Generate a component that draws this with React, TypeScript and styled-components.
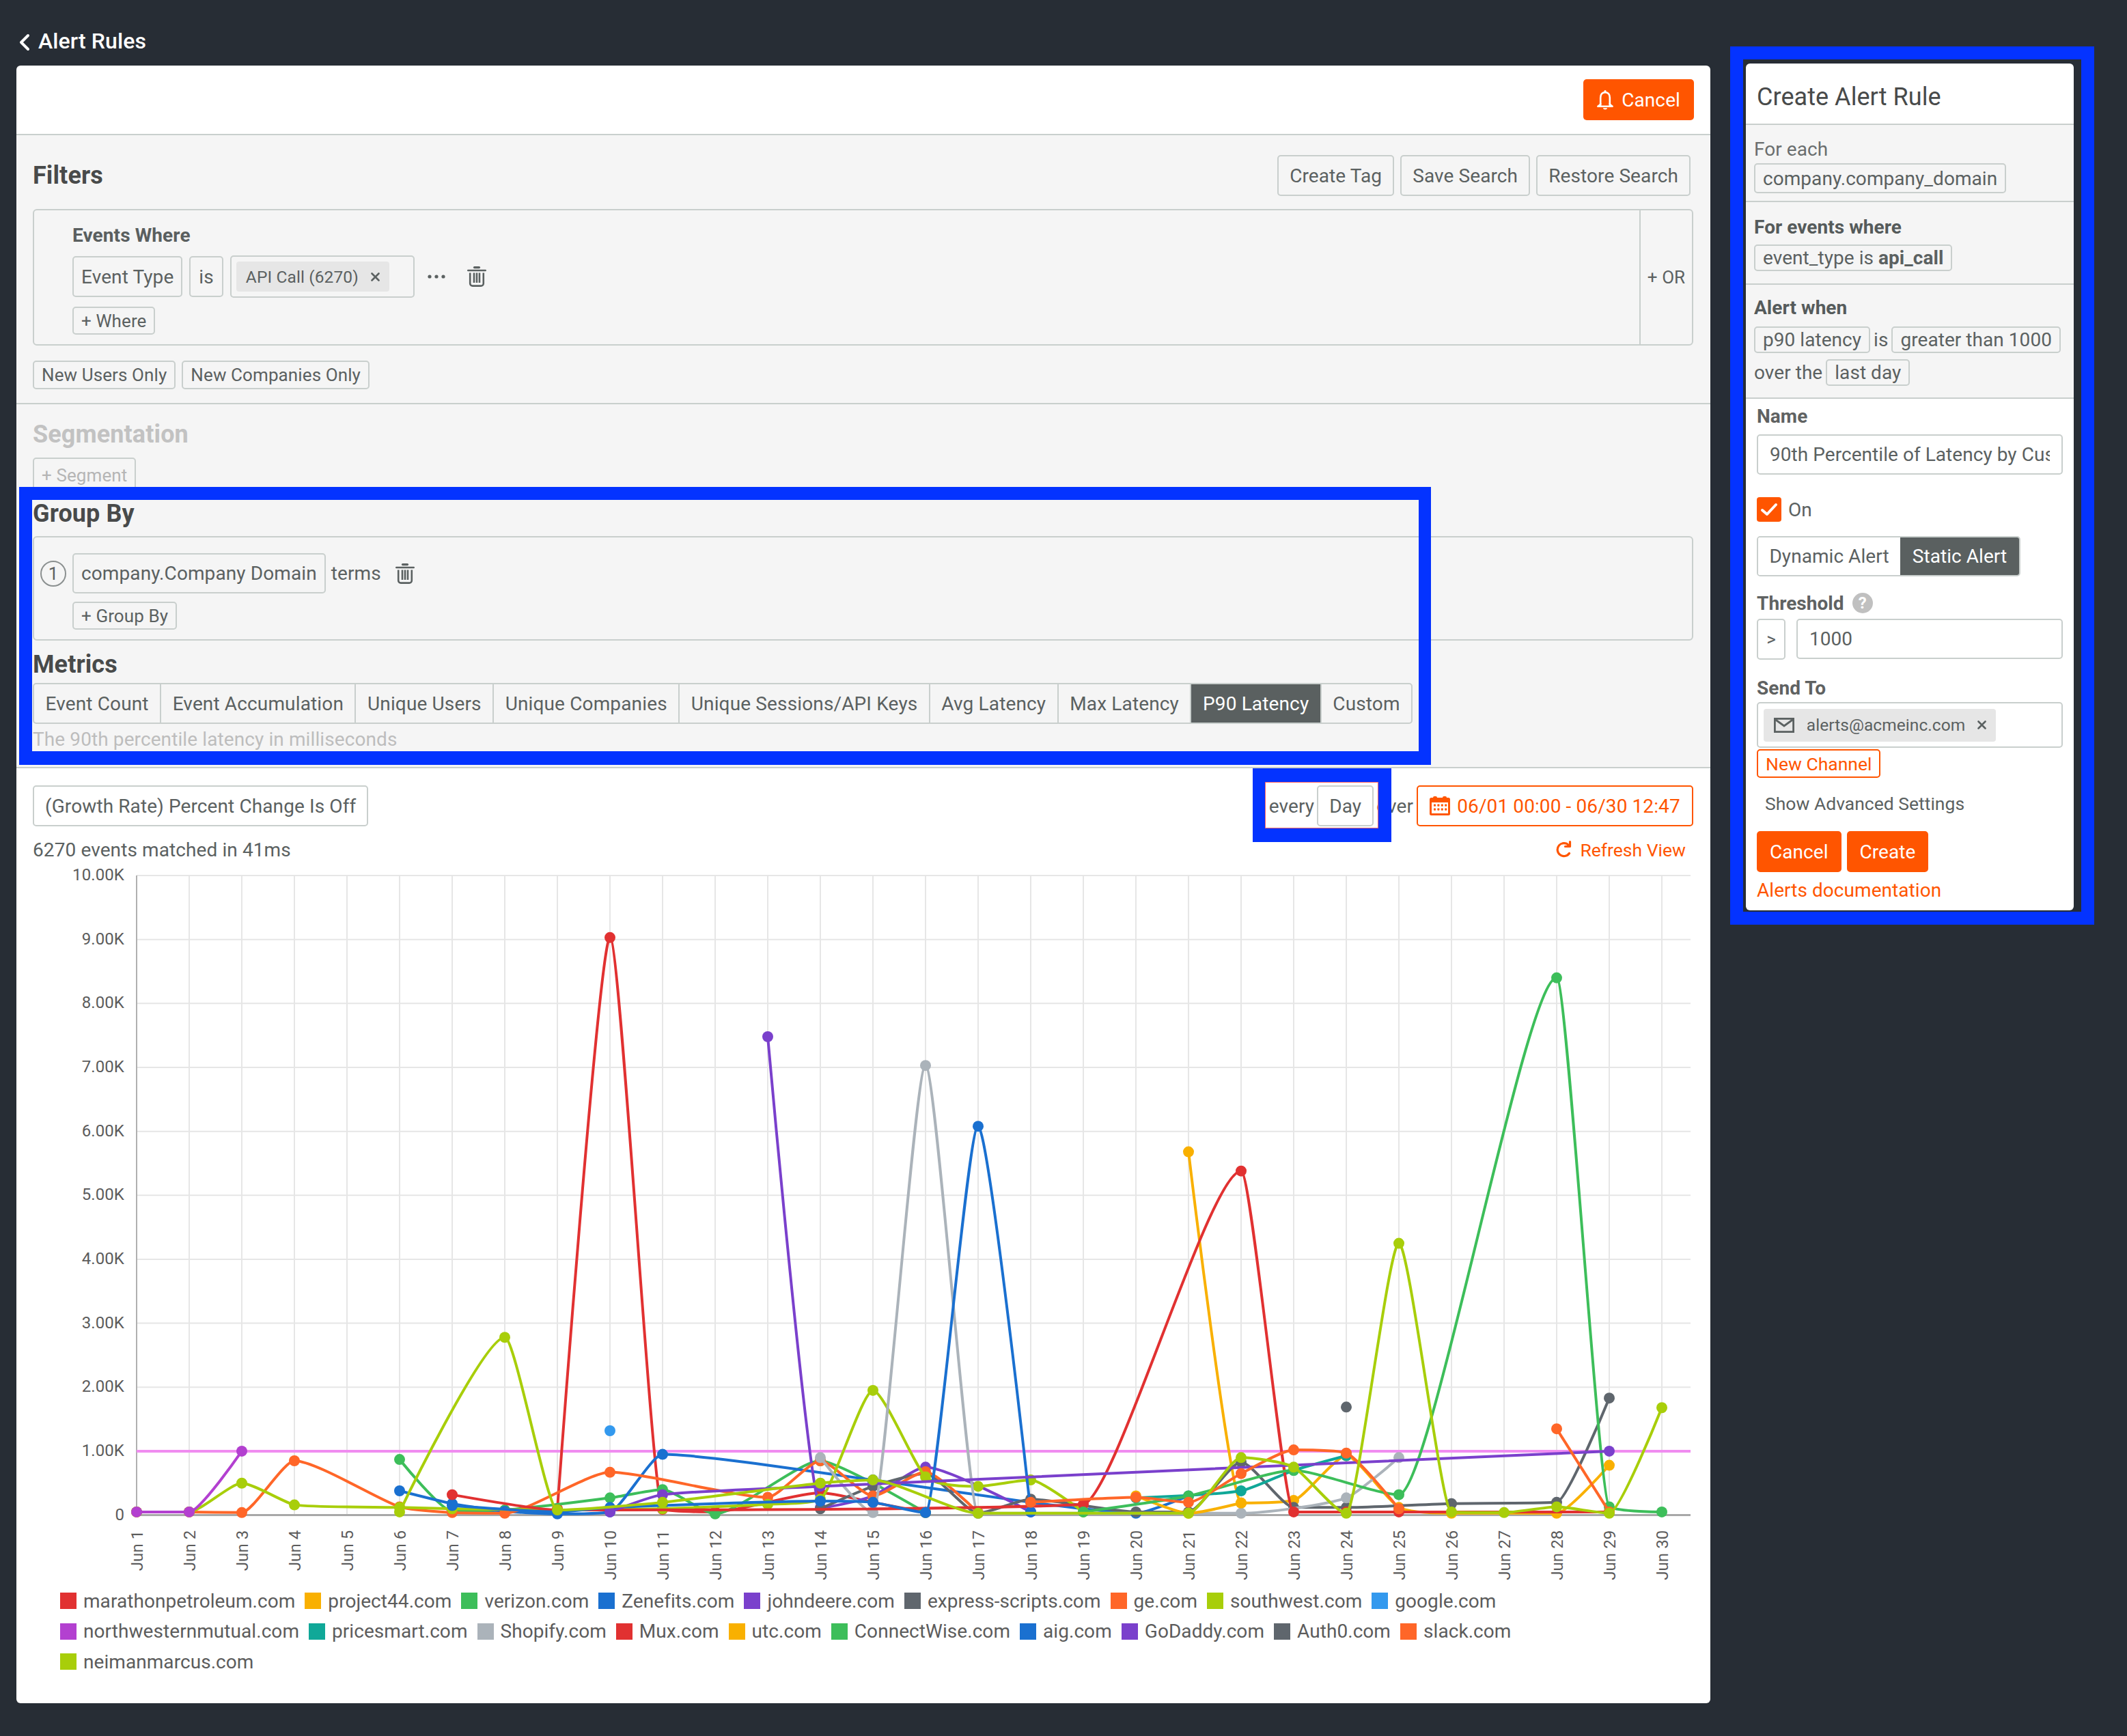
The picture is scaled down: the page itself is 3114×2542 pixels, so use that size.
import React from 'react';
import styled, { createGlobalStyle } from 'styled-components';

const ORANGE = '#ff5500';
const TEXT = '#5b6161';
const LINE = '#c9cfcd';

const COLORS = {
  red: '#e13131',
  amber: '#f9b000',
  green: '#3dbe5a',
  blue: '#1a70d0',
  purple: '#7a40cc',
  slate: '#5f666d',
  orange: '#ff6628',
  lime: '#a8ce0a',
  sky: '#3399ee',
  magenta: '#b340d0',
  teal: '#10a898',
  silver: '#abb3ba',
};

type Point = [number, number];
type Series = { name: string; color: string; points: Point[]; also?: Point[] };

const SERIES: Series[] = [
  { name: 'marathonpetroleum.com', color: COLORS.red, points: [[9, 0.1], [10, 9.03], [11, 0.09], [12, 0.05], [14, 0.35], [15, 0.2], [16, 0.04]] },
  { name: 'project44.com', color: COLORS.amber, points: [[21, 5.68], [22, 0.19], [23, 0.23], [24, 0.93], [25, 0.12], [26, 0.03], [28, 0.03], [29, 0.78]] },
  { name: 'verizon.com', color: COLORS.green, points: [[6, 0.87], [7, 0.06], [8, 0.08], [10, 0.27], [11, 0.4], [12, 0.02], [14, 0.85], [15, 0.5], [16, 0.04]] },
  { name: 'Zenefits.com', color: COLORS.blue, points: [[6, 0.38], [7, 0.18], [8, 0.06], [9, 0.02], [10, 0.05], [11, 0.95], [15, 0.55], [18, 0.2], [20, 0.03], [21, 0.3]] },
  { name: 'johndeere.com', color: COLORS.purple, points: [[13, 7.48], [14, 0.12], [15, 0.3], [16, 0.75], [18, 0.05]] },
  { name: 'express-scripts.com', color: COLORS.slate, points: [[14, 0.1], [15, 0.45], [16, 0.65], [17, 0.03], [18, 0.25], [20, 0.05], [21, 0.05], [22, 0.83], [23, 0.12], [24, 0.12], [26, 0.18], [28, 0.2], [29, 1.83]] },
  { name: 'ge.com', color: COLORS.orange, points: [[1, 0.05], [2, 0.05], [3, 0.04], [4, 0.85], [6, 0.13], [7, 0.04], [8, 0.03], [10, 0.67], [13, 0.28], [14, 0.85], [15, 0.3], [16, 0.68], [17, 0.04]] },
  { name: 'southwest.com', color: COLORS.lime, points: [[1, 0.05], [2, 0.05], [3, 0.5], [4, 0.16], [6, 0.12], [7, 0.1], [9, 0.08], [11, 0.1], [13, 0.17], [14, 0.25], [15, 1.95], [16, 0.6], [17, 0.45], [18, 0.55], [19, 0.05]] },
  { name: 'google.com', color: COLORS.sky, points: [[10, 1.32]] },
  { name: 'northwesternmutual.com', color: COLORS.magenta, points: [[1, 0.05], [2, 0.05], [3, 1.0]] },
  { name: 'pricesmart.com', color: COLORS.teal, points: [[20, 0.27], [22, 0.38], [23, 0.7], [24, 0.93]] },
  { name: 'Shopify.com', color: COLORS.silver, points: [[14, 0.9], [15, 0.04], [16, 7.03], [17, 0.03], [22, 0.03], [24, 0.27], [25, 0.9]] },
  { name: 'Mux.com', color: COLORS.red, points: [[7, 0.32], [9, 0.08], [19, 0.17], [22, 5.38], [23, 0.05], [24, 0.05], [25, 0.05], [29, 0.05]] },
  { name: 'utc.com', color: COLORS.amber, points: [[20, 0.3], [21, 0.03], [22, 0.19]] },
  { name: 'ConnectWise.com', color: COLORS.green, points: [[19, 0.05], [21, 0.3], [23, 0.7], [25, 0.32], [28, 8.4], [29, 0.13], [30, 0.05]] },
  { name: 'aig.com', color: COLORS.blue, points: [[7, 0.15], [9, 0.05], [10, 0.12], [14, 0.22], [15, 0.2], [16, 0.04], [17, 6.08], [18, 0.05]] },
  { name: 'GoDaddy.com', color: COLORS.purple, points: [[10, 0.05], [11, 0.32], [14, 0.45], [29, 1.0]] },
  { name: 'Auth0.com', color: COLORS.slate, points: [[24, 1.69]] },
  { name: 'slack.com', color: COLORS.orange, points: [[18, 0.2], [20, 0.28], [21, 0.2], [22, 0.65], [23, 1.02], [24, 0.97], [25, 0.1]], also: [[28, 1.35], [29, 0.05]] },
  { name: 'neimanmarcus.com', color: COLORS.lime, points: [[6, 0.05], [8, 2.78], [9, 0.08], [11, 0.2], [14, 0.5], [15, 0.55], [17, 0.03], [21, 0.03], [22, 0.9], [23, 0.75], [24, 0.03], [25, 4.25], [26, 0.05], [27, 0.04], [28, 0.13], [29, 0.03], [30, 1.68]] },
];

// chart geometry, in svg units (the svg starts at the card's left edge)
const PLOT_LEFT = 176;
const PLOT_RIGHT = 2451;
const PLOT_TOP = 20;
const PLOT_ZERO = 956.6;
const DAY_STEP = 77;
const K_STEP = (PLOT_ZERO - PLOT_TOP) / 10;

const dayX = (day: number) => PLOT_LEFT + (day - 1) * DAY_STEP;
const valueY = (value: number) => PLOT_ZERO - value * K_STEP;

// spline with control points kept close to the data points
const splinePath = (points: Point[]) => {
  const pts = points.map(([d, v]) => ({ x: dayX(d), y: valueY(v) }));
  const smoothing = 4;
  const denom = smoothing + 1;
  const conts = pts.map((p, i) => {
    const last = pts[i - 1];
    const next = pts[i + 1];
    if (!last || !next) return { lx: p.x, ly: p.y, rx: p.x, ry: p.y };
    const lx = (smoothing * p.x + last.x) / denom;
    let ly = (smoothing * p.y + last.y) / denom;
    const rx = (smoothing * p.x + next.x) / denom;
    let ry = (smoothing * p.y + next.y) / denom;
    const correction = ((ry - ly) * (rx - p.x)) / (rx - lx) + p.y - ry;
    ly += correction;
    ry += correction;
    if (ly > last.y && ly > p.y) {
      ly = Math.max(last.y, p.y);
      ry = 2 * p.y - ly;
    } else if (ly < last.y && ly < p.y) {
      ly = Math.min(last.y, p.y);
      ry = 2 * p.y - ly;
    }
    if (ry > next.y && ry > p.y) {
      ry = Math.max(next.y, p.y);
      ly = 2 * p.y - ry;
    } else if (ry < next.y && ry < p.y) {
      ry = Math.min(next.y, p.y);
      ly = 2 * p.y - ry;
    }
    return { lx, ly, rx, ry };
  });
  return pts
    .map((p, i) => {
      if (i === 0) return `M ${p.x} ${p.y}`;
      const a = conts[i - 1];
      const b = conts[i];
      return `C ${a.rx} ${a.ry} ${b.lx} ${b.ly} ${p.x} ${p.y}`;
    })
    .join(' ');
};

const GlobalStyle = createGlobalStyle`
  html, body {
    margin: 0;
    padding: 0;
    background: #272d35;
    font-family: Roboto, "Liberation Sans", sans-serif;
  }
  * { box-sizing: border-box; }
  button { letter-spacing: inherit; }
`;

const Page = styled.div`
  position: relative;
  width: 3114px;
  height: 2542px;
  overflow: hidden;
  display: flex;
  align-items: flex-start;
  padding-left: 24px;
  color: ${TEXT};
  font-size: 28px;
  letter-spacing: 0.1px;
`;

const MainColumn = styled.div`
  width: 2480px;
  flex-shrink: 0;
`;

const BackLink = styled.div`
  height: 96px;
  padding: 24px 0 0 4px;
  display: flex;
  align-items: center;
  gap: 12px;
  color: #fff;
  font-size: 32px;
  font-weight: 500;
  svg { margin-top: 4px; }
`;

const Card = styled.div`
  height: 2398px;
  background: #fff;
  border-radius: 6px;
  overflow: hidden;
`;

const CardHeader = styled.div`
  height: 102px;
  padding: 20px 24px 0 0;
  display: flex;
  justify-content: flex-end;
  align-items: flex-start;
  border-bottom: 2px solid ${LINE};
`;

const SolidButton = styled.button`
  height: 60px;
  padding: 0 19px;
  display: inline-flex;
  align-items: center;
  gap: 10px;
  background: ${ORANGE};
  color: #fff;
  border: 0;
  border-radius: 5px;
  font: 400 28px Roboto, sans-serif;
`;

const HeaderCancel = styled(SolidButton)`
  padding: 0 20px;
  gap: 12px;
`;

const GreySection = styled.div`
  background: #f5f5f5;
  padding: 0 25px 0 24px;
  border-bottom: 2px solid ${LINE};
`;

const FiltersSection = styled(GreySection)`
  padding-top: 29px;
  padding-bottom: 20px;
`;

const BuilderSection = styled(GreySection)`
  padding-top: 24px;
  padding-bottom: 23px;
`;

const FiltersHead = styled.div`
  height: 60px;
  display: flex;
  align-items: center;
  justify-content: space-between;
  padding-right: 4px;
`;

const Heading = styled.h2<{ $muted?: boolean; $top?: number }>`
  margin: ${(p) => p.$top ?? 0}px 0 0;
  font-size: 36px;
  line-height: 40px;
  font-weight: 700;
  color: ${(p) => (p.$muted ? '#c2c2c2' : '#484a4a')};
`;

const ButtonRow = styled.div`
  display: flex;
  gap: 9px;
`;

const Outline = styled.button<{ $h?: number; $muted?: boolean; $size?: number; $pad?: number }>`
  height: ${(p) => p.$h ?? 60}px;
  padding: 0 ${(p) => p.$pad ?? (p.$h && p.$h < 50 ? 11 : 16)}px;
  background: transparent;
  border: 2px solid ${LINE};
  border-radius: 5px;
  color: ${(p) => (p.$muted ? '#b5b5b5' : TEXT)};
  font: 400 ${(p) => p.$size ?? 28}px Roboto, sans-serif;
  white-space: nowrap;
  display: inline-flex;
  align-items: center;
`;

const QueryBox = styled.div`
  margin-top: 19px;
  height: 200px;
  display: flex;
  border: 2px solid ${LINE};
  border-radius: 6px;
`;

const QueryBody = styled.div`
  flex: 1;
  padding: 20px 0 0 56px;
`;

const SubHeading = styled.div`
  line-height: 34px;
  font-weight: 700;
  color: #5a5f5f;
`;

const ClauseRow = styled.div`
  margin-top: 12px;
  height: 62px;
  display: flex;
  align-items: center;
  gap: 10px;
`;

const AddWhere = styled.div`
  margin-top: 13px;
`;

const OrCell = styled.div`
  width: 77px;
  border-left: 2px solid ${LINE};
  display: flex;
  align-items: center;
  justify-content: center;
  font-size: 26px;
`;

const ValueSelect = styled.div`
  width: 270px;
  height: 62px;
  padding: 0 7px;
  border: 2px solid ${LINE};
  border-radius: 5px;
  display: flex;
  align-items: center;
`;

const Tag = styled.span`
  width: 224px;
  height: 44px;
  padding-left: 14px;
  display: flex;
  align-items: center;
  justify-content: space-between;
  padding-right: 14px;
  background: #e6e6e6;
  border-radius: 4px;
  font-size: 24.5px;
`;

const IconSlot = styled.span<{ $left?: number }>`
  display: inline-flex;
  margin-left: ${(p) => p.$left ?? 0}px;
`;

const QuickFilters = styled(ButtonRow)`
  margin-top: 22px;
`;

const SegmentButton = styled.div`
  margin-top: 14px;
`;

const GroupBox = styled.div`
  margin-top: 13px;
  height: 153px;
  padding: 23px 0 0 9px;
  border: 2px solid ${LINE};
  border-radius: 6px;
`;

const GroupRow = styled.div`
  height: 59px;
  display: flex;
  align-items: center;
`;

const IndexCircle = styled.span`
  width: 38px;
  height: 38px;
  margin-right: 9px;
  border: 2px solid #8b9090;
  border-radius: 50%;
  display: flex;
  align-items: center;
  justify-content: center;
  font-size: 26px;
`;

const AddGroup = styled.div`
  margin: 12px 0 0 47px;
`;

const MetricTabs = styled.div`
  margin-top: 7px;
  height: 60px;
  width: fit-content;
  display: flex;
  border: 2px solid ${LINE};
  border-radius: 5px;
  overflow: hidden;
  letter-spacing: 0.14px;
`;

const MetricTab = styled.div<{ $active?: boolean }>`
  padding: 0 16.5px;
  display: flex;
  align-items: center;
  white-space: nowrap;
  background: ${(p) => (p.$active ? '#5a6060' : 'transparent')};
  color: ${(p) => (p.$active ? '#fff' : TEXT)};
  & + & { border-left: 2px solid ${LINE}; }
`;

const Hint = styled.div`
  margin-top: 6px;
  line-height: 34px;
  color: #bdbdbd;
`;

const ChartSection = styled.div`
  padding: 25px 25px 0 24px;
`;

const ChartControls = styled.div`
  height: 60px;
  display: flex;
  justify-content: space-between;
`;

const Interval = styled.div`
  display: flex;
  align-items: center;
`;

const IntervalWord = styled.span<{ $left: number; $right: number }>`
  margin: 0 ${(p) => p.$right}px 0 ${(p) => p.$left}px;
`;

const DateButton = styled.button`
  width: 405px;
  height: 60px;
  display: flex;
  align-items: center;
  justify-content: center;
  gap: 10px;
  background: #fff;
  border: 2px solid ${ORANGE};
  border-radius: 5px;
  color: ${ORANGE};
  font: 400 28px Roboto, sans-serif;
  white-space: nowrap;
`;

const StatsRow = styled.div`
  margin-top: 17px;
  height: 34px;
  display: flex;
  align-items: center;
  justify-content: space-between;
  padding-right: 11px;
`;

const RefreshLink = styled.span`
  display: flex;
  align-items: center;
  gap: 11px;
  color: ${ORANGE};
  font-size: 26.5px;
  letter-spacing: 0;
`;

const ChartSvg = styled.svg`
  display: block;
  width: 2480px;
  height: 1060px;
  margin: 1px 0 0 -24px;
`;

const AxisText = styled.text`
  font: 400 24px Roboto, sans-serif;
  fill: #5c5c5c;
`;

const Legend = styled.div`
  margin-left: 40px;
  display: flex;
  flex-wrap: wrap;
  column-gap: 14px;
  letter-spacing: 0.06px;
`;

const LegendItem = styled.div`
  height: 44.5px;
  display: flex;
  align-items: center;
  gap: 10px;
  color: #5c5c5c;
`;

const Swatch = styled.i<{ $color: string }>`
  width: 24px;
  height: 24px;
  background: ${(p) => p.$color};
`;

const SidePanel = styled.aside`
  margin: 93px 0 0 52px;
  width: 480px;
  height: 1240px;
  flex-shrink: 0;
  background: #fff;
  border-radius: 6px;
  overflow: hidden;
  letter-spacing: 0.05px;
`;

const PanelTitle = styled.div`
  height: 90px;
  padding: 9px 0 0 16px;
  display: flex;
  align-items: center;
  font-size: 36px;
  color: #484a4a;
  border-bottom: 2px solid ${LINE};
`;

const SummaryBlock = styled.div<{ $top: number; $bottom: number }>`
  padding: ${(p) => p.$top}px 12px ${(p) => p.$bottom}px;
  background: #f5f5f5;
  border-bottom: 2px solid ${LINE};
`;

const SummaryLabel = styled.div<{ $bold?: boolean }>`
  line-height: 32px;
  font-weight: ${(p) => (p.$bold ? 700 : 400)};
  color: ${(p) => (p.$bold ? '#555b5b' : '#6a6e6e')};
`;

const SummaryLine = styled.div<{ $top: number }>`
  margin-top: ${(p) => p.$top}px;
  display: flex;
  align-items: center;
  gap: 5px;
`;

const Chip = styled.span<{ $tall?: boolean }>`
  height: ${(p) => (p.$tall ? 44 : 39)}px;
  padding: 0 11px;
  display: inline-flex;
  align-items: center;
  white-space: pre;
  border: 2px solid ${LINE};
  border-radius: 5px;
`;

const PanelForm = styled.div`
  padding: 9px 16px 0;
`;

const FieldLabel = styled.div<{ $top?: number }>`
  margin-top: ${(p) => p.$top ?? 0}px;
  height: 32px;
  display: flex;
  align-items: center;
  gap: 12px;
  font-weight: 700;
  color: #5f6262;
`;

const TextBox = styled.div<{ $top?: number }>`
  margin-top: ${(p) => p.$top ?? 0}px;
  flex: 1;
  height: 59px;
  padding: 0 17px;
  display: flex;
  align-items: center;
  border: 2px solid ${LINE};
  border-radius: 5px;
  background: #fff;
`;

const ClippedValue = styled.span`
  display: block;
  width: 100%;
  overflow: hidden;
  white-space: nowrap;
`;

const CheckRow = styled.div`
  margin-top: 33px;
  height: 36px;
  display: flex;
  align-items: center;
  gap: 10px;
`;

const CheckBox = styled.span`
  width: 36px;
  height: 36px;
  display: flex;
  align-items: center;
  justify-content: center;
  background: ${ORANGE};
  border-radius: 4px;
`;

const AlertToggle = styled.div`
  margin-top: 21px;
  width: 386px;
  height: 59px;
  display: flex;
  border: 2px solid ${LINE};
  border-radius: 5px;
  overflow: hidden;
`;

const ToggleOption = styled.div<{ $active?: boolean }>`
  flex: ${(p) => (p.$active ? '0 0 174px' : '1')};
  display: flex;
  align-items: center;
  justify-content: center;
  background: ${(p) => (p.$active ? '#5a6060' : '#fff')};
  color: ${(p) => (p.$active ? '#fff' : TEXT)};
`;

const HelpDot = styled.span`
  width: 30px;
  height: 30px;
  border-radius: 50%;
  display: flex;
  align-items: center;
  justify-content: center;
  background: #c0c0c0;
  color: #fff;
  font-size: 24px;
  font-weight: 700;
`;

const ThresholdRow = styled.div`
  margin-top: 7px;
  display: flex;
  gap: 16px;
`;

const OperatorBox = styled.div`
  width: 42px;
  height: 60px;
  display: flex;
  align-items: center;
  justify-content: center;
  border: 2px solid ${LINE};
  border-radius: 5px;
  font-size: 26px;
`;

const ChannelBox = styled.div`
  margin-top: 5px;
  height: 67px;
  padding-left: 8px;
  display: flex;
  align-items: center;
  border: 2px solid ${LINE};
  border-radius: 5px;
`;

const ChannelTag = styled.div`
  width: 340px;
  height: 48px;
  padding: 0 14px;
  display: flex;
  align-items: center;
  justify-content: space-between;
  background: #e6e6e6;
  border-radius: 4px;
  font-size: 24.5px;
`;

const NewChannel = styled.button`
  margin-top: 2px;
  height: 42px;
  padding: 0 11px;
  background: #fff;
  border: 2px solid ${ORANGE};
  border-radius: 5px;
  color: ${ORANGE};
  font: 400 26.5px Roboto, sans-serif;
  letter-spacing: 0;
`;

const AdvancedLink = styled.div`
  margin: 22px 0 0 12px;
  line-height: 32px;
  font-size: 26.5px;
  letter-spacing: 0;
`;

const PanelActions = styled.div`
  margin-top: 24px;
  display: flex;
  gap: 8px;
`;

const DocsLink = styled.div`
  margin-top: 11px;
  line-height: 32px;
  color: ${ORANGE};
`;

const MarkupFrame = styled.div<{ $x: number; $y: number; $w: number; $h: number }>`
  position: absolute;
  left: ${(p) => p.$x}px;
  top: ${(p) => p.$y}px;
  width: ${(p) => p.$w}px;
  height: ${(p) => p.$h}px;
  border: 19px solid #0433ff;
  pointer-events: none;
`;

const GroupFrame = styled(MarkupFrame)`
  border-width: 19px 18px 20px 19px;
  box-shadow: 19px 2px 0 -19px #f55;
`;

const IntervalFrame = styled(MarkupFrame)`
  border-width: 20px 19px 20px 18px;
  &::after {
    content: '';
    position: absolute;
    inset: 0;
    border: 1px solid #f66;
  }
`;

const ChevronIcon = () => (
  <svg width="16" height="26" viewBox="0 0 16 26" fill="none" stroke="#fff" strokeWidth="4" strokeLinecap="round" strokeLinejoin="round">
    <path d="M13 3 L3 13 L13 23" />
  </svg>
);

const BellIcon = () => (
  <svg width="24" height="30" viewBox="0 0 24 30" fill="none" stroke="#fff" strokeWidth="2.6" strokeLinejoin="round" strokeLinecap="round">
    <circle cx="12" cy="2.6" r="1.6" fill="#fff" stroke="none" />
    <path d="M5.2 23.5 V12 C5.2 7 8 4.2 12 4.2 C16 4.2 18.8 7 18.8 12 V23.5" />
    <path d="M5.2 21 C5 22.6 3.4 23.4 1.4 24.8 H22.6 C20.6 23.4 19 22.6 18.8 21" />
    <path d="M9.5 28 C10.5 29.4 13.5 29.4 14.5 28 Z" fill="#fff" strokeWidth="1" />
  </svg>
);

const TrashIcon = () => (
  <svg width="28" height="30" viewBox="0 0 28 30" fill="none" stroke="#5b6161" strokeLinecap="round">
    <path d="M10.5 1.6 H17.5" strokeWidth="3.2" />
    <path d="M1.2 6 H26.8" strokeWidth="2.4" />
    <path d="M4.2 9.5 V25 A3.6 3.6 0 0 0 7.8 28.6 H20.2 A3.6 3.6 0 0 0 23.8 25 V9.5" strokeWidth="2.6" strokeLinecap="butt" />
    <path d="M10 9.5 V24 M14 9.5 V24 M18 9.5 V24" strokeWidth="2.6" strokeLinecap="butt" />
  </svg>
);

const DotsIcon = () => (
  <svg width="26" height="6" viewBox="0 0 26 6" fill="#5b6161">
    <circle cx="3" cy="3" r="2.6" />
    <circle cx="13" cy="3" r="2.6" />
    <circle cx="23" cy="3" r="2.6" />
  </svg>
);

const CloseIcon = ({ size = 13 }: { size?: number }) => (
  <svg width={size} height={size} viewBox="0 0 13 13" stroke="#5b6161" strokeWidth="2.6" strokeLinecap="round">
    <path d="M1.5 1.5 L11.5 11.5 M11.5 1.5 L1.5 11.5" />
  </svg>
);

const CalendarIcon = () => (
  <svg width="30" height="28" viewBox="0 0 30 28" fill={ORANGE}>
    <rect x="5" y="0" width="6" height="6" rx="2" />
    <rect x="19" y="0" width="6" height="6" rx="2" />
    <rect x="0" y="2" width="30" height="26" rx="2.5" />
    <rect x="3" y="9" width="24" height="16" fill="#fff" />
    {[0, 1].map((row) =>
      [0, 1, 2, 3].map((col) => <rect key={`${row}-${col}`} x={6 + col * 5.4} y={11.5 + row * 6} width="3" height="3.2" rx="0.8" />),
    )}
  </svg>
);

const RefreshIcon = () => (
  <svg width="24" height="28" viewBox="0 0 24 28" fill="none" stroke={ORANGE} strokeWidth="3.2" strokeLinecap="round" strokeLinejoin="round">
    <path d="M19.5 19.5 A9.5 9.5 0 1 1 18.5 7.5" />
    <path d="M20.5 2.5 V9.5 H13.5" />
  </svg>
);

const CheckIcon = () => (
  <svg width="26" height="22" viewBox="0 0 26 22" fill="none" stroke="#fff" strokeWidth="4" strokeLinecap="round" strokeLinejoin="round">
    <path d="M3 12 L10 18 L23 4" />
  </svg>
);

const MailIcon = () => (
  <svg width="30" height="22" viewBox="0 0 30 22" fill="none" stroke="#5b6161" strokeWidth="2.8">
    <rect x="1.4" y="1.4" width="27.2" height="19.2" />
    <path d="M2 2.5 L15 12 L28 2.5" />
  </svg>
);

const SeriesLine = ({ points, color }: { points: Point[]; color: string }) => (
  <g>
    <path d={splinePath(points)} fill="none" stroke={color} strokeWidth="4" strokeLinejoin="round" />
    {points.map(([d, v]) => (
      <circle key={d} cx={dayX(d)} cy={valueY(v)} r="8" fill={color} />
    ))}
  </g>
);

const Chart = () => {
  const ks = Array.from({ length: 11 }, (_, i) => i);
  const days = Array.from({ length: 30 }, (_, i) => i + 1);
  return (
    <ChartSvg viewBox="0 0 2480 1060">
      {ks.map((k) => (
        <line key={k} x1={PLOT_LEFT} x2={PLOT_RIGHT} y1={valueY(k)} y2={valueY(k)} stroke="#e6e6e6" strokeWidth="2" />
      ))}
      {days.map((d) => (
        <line key={d} x1={dayX(d)} x2={dayX(d)} y1={PLOT_TOP} y2={PLOT_ZERO} stroke="#e6e6e6" strokeWidth="2" />
      ))}
      <line x1={PLOT_LEFT} x2={PLOT_LEFT} y1={PLOT_TOP} y2={PLOT_ZERO} stroke="#b0b0b0" strokeWidth="2" />
      <line x1={PLOT_LEFT} x2={PLOT_RIGHT} y1={PLOT_ZERO} y2={PLOT_ZERO} stroke="#a8a8a8" strokeWidth="3" />
      {ks.map((k) => (
        <AxisText key={k} x={PLOT_LEFT - 18} y={valueY(k) + 7} textAnchor="end">
          {k === 0 ? '0' : `${k}.00K`}
        </AxisText>
      ))}
      {days.map((d) => (
        <AxisText key={d} textAnchor="end" transform={`translate(${dayX(d) + 9} ${PLOT_ZERO + 22}) rotate(-90)`}>
          {`Jun ${d}`}
        </AxisText>
      ))}
      <line x1={PLOT_LEFT} x2={PLOT_RIGHT} y1={valueY(1)} y2={valueY(1)} stroke="#f08cf0" strokeWidth="4" />
      {SERIES.map((s) => (
        <g key={s.name}>
          <SeriesLine points={s.points} color={s.color} />
          {s.also && <SeriesLine points={s.also} color={s.color} />}
        </g>
      ))}
    </ChartSvg>
  );
};

const METRICS = ['Event Count', 'Event Accumulation', 'Unique Users', 'Unique Companies', 'Unique Sessions/API Keys', 'Avg Latency', 'Max Latency', 'P90 Latency', 'Custom'];

const App = () => (
  <Page>
    <GlobalStyle />
    <MainColumn>
      <BackLink>
        <ChevronIcon />
        Alert Rules
      </BackLink>
      <Card>
        <CardHeader>
          <HeaderCancel>
            <BellIcon />
            Cancel
          </HeaderCancel>
        </CardHeader>
        <FiltersSection>
          <FiltersHead>
            <Heading>Filters</Heading>
            <ButtonRow>
              <Outline>Create Tag</Outline>
              <Outline>Save Search</Outline>
              <Outline>Restore Search</Outline>
            </ButtonRow>
          </FiltersHead>
          <QueryBox>
            <QueryBody>
              <SubHeading>Events Where</SubHeading>
              <ClauseRow>
                <Outline $pad={11}>Event Type</Outline>
                <Outline $pad={12}>is</Outline>
                <ValueSelect>
                  <Tag>
                    API Call (6270)
                    <CloseIcon />
                  </Tag>
                </ValueSelect>
                <IconSlot $left={9}>
                  <DotsIcon />
                </IconSlot>
                <IconSlot $left={22}>
                  <TrashIcon />
                </IconSlot>
              </ClauseRow>
              <AddWhere>
                <Outline $h={41} $size={26}>+ Where</Outline>
              </AddWhere>
            </QueryBody>
            <OrCell>+ OR</OrCell>
          </QueryBox>
          <QuickFilters>
            <Outline $h={42} $size={26}>New Users Only</Outline>
            <Outline $h={42} $size={26}>New Companies Only</Outline>
          </QuickFilters>
        </FiltersSection>
        <BuilderSection>
          <Heading $muted>Segmentation</Heading>
          <SegmentButton>
            <Outline $h={52} $muted $size={26} $pad={11}>+ Segment</Outline>
          </SegmentButton>
          <Heading $top={10}>Group By</Heading>
          <GroupBox>
            <GroupRow>
              <IndexCircle>1</IndexCircle>
              <Outline $h={59} $pad={11}>company.Company Domain</Outline>
              <IconSlot $left={8}>terms</IconSlot>
              <IconSlot $left={21}>
                <TrashIcon />
              </IconSlot>
            </GroupRow>
            <AddGroup>
              <Outline $h={41} $size={26}>+ Group By</Outline>
            </AddGroup>
          </GroupBox>
          <Heading $top={15}>Metrics</Heading>
          <MetricTabs>
            {METRICS.map((m) => (
              <MetricTab key={m} $active={m === 'P90 Latency'}>
                {m}
              </MetricTab>
            ))}
          </MetricTabs>
          <Hint>The 90th percentile latency in milliseconds</Hint>
        </BuilderSection>
        <ChartSection>
          <ChartControls>
            <Outline>(Growth Rate) Percent Change Is Off</Outline>
            <Interval>
              <IntervalWord $left={0} $right={4}>every</IntervalWord>
              <Outline>Day</Outline>
              <IntervalWord $left={4} $right={5}>over</IntervalWord>
              <DateButton>
                <CalendarIcon />
                06/01 00:00 - 06/30 12:47
              </DateButton>
            </Interval>
          </ChartControls>
          <StatsRow>
            <span>6270 events matched in 41ms</span>
            <RefreshLink>
              <RefreshIcon />
              Refresh View
            </RefreshLink>
          </StatsRow>
          <Chart />
          <Legend>
            {SERIES.map((s) => (
              <LegendItem key={s.name}>
                <Swatch $color={s.color} />
                {s.name}
              </LegendItem>
            ))}
          </Legend>
        </ChartSection>
      </Card>
    </MainColumn>
    <SidePanel>
      <PanelTitle>Create Alert Rule</PanelTitle>
      <SummaryBlock $top={20} $bottom={11}>
        <SummaryLabel>For each</SummaryLabel>
        <SummaryLine $top={4}>
          <Chip $tall>company.company_domain</Chip>
        </SummaryLine>
      </SummaryBlock>
      <SummaryBlock $top={21} $bottom={18}>
        <SummaryLabel $bold>For events where</SummaryLabel>
        <SummaryLine $top={9}>
          <Chip>
            event_type is <b>api_call</b>
          </Chip>
        </SummaryLine>
      </SummaryBlock>
      <SummaryBlock $top={18} $bottom={17}>
        <SummaryLabel $bold>Alert when</SummaryLabel>
        <SummaryLine $top={11}>
          <Chip>p90 latency</Chip>
          is
          <Chip>greater than 1000</Chip>
        </SummaryLine>
        <SummaryLine $top={9}>
          over the
          <Chip>last day</Chip>
        </SummaryLine>
      </SummaryBlock>
      <PanelForm>
        <FieldLabel>Name</FieldLabel>
        <TextBox $top={11}>
          <ClippedValue>90th Percentile of Latency by Customer</ClippedValue>
        </TextBox>
        <CheckRow>
          <CheckBox>
            <CheckIcon />
          </CheckBox>
          On
        </CheckRow>
        <AlertToggle>
          <ToggleOption>Dynamic Alert</ToggleOption>
          <ToggleOption $active>Static Alert</ToggleOption>
        </AlertToggle>
        <FieldLabel $top={23}>
          Threshold
          <HelpDot>?</HelpDot>
        </FieldLabel>
        <ThresholdRow>
          <OperatorBox>&gt;</OperatorBox>
          <TextBox>1000</TextBox>
        </ThresholdRow>
        <FieldLabel $top={25}>Send To</FieldLabel>
        <ChannelBox>
          <ChannelTag>
            <IconSlot $left={1}>
              <MailIcon />
            </IconSlot>
            alerts@acmeinc.com
            <CloseIcon />
          </ChannelTag>
        </ChannelBox>
        <NewChannel>New Channel</NewChannel>
        <AdvancedLink>Show Advanced Settings</AdvancedLink>
        <PanelActions>
          <SolidButton>Cancel</SolidButton>
          <SolidButton>Create</SolidButton>
        </PanelActions>
        <DocsLink>Alerts documentation</DocsLink>
      </PanelForm>
    </SidePanel>
    <GroupFrame $x={28} $y={713} $w={2067} $h={407} />
    <IntervalFrame $x={1834} $y={1125} $w={203} $h={108} />
    <MarkupFrame $x={2533} $y={68} $w={533} $h={1286} />
  </Page>
);

export default App;
